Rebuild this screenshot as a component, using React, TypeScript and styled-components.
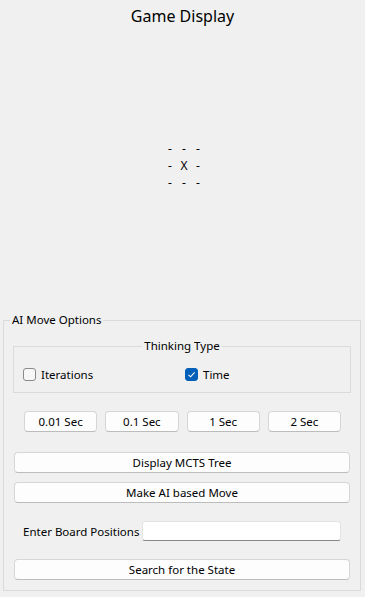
import React, { useState } from 'react';
import styled, { createGlobalStyle } from 'styled-components';

const GlobalStyle = createGlobalStyle`
  html, body {
    margin: 0;
    padding: 0;
    background: #f0f0f0;
  }
  body {
    font-family: "Noto Sans", "Open Sans", sans-serif;
    font-size: 11.5px;
    color: #000;
  }
`;

const Window = styled.div`
  width: 365px;
  height: 597px;
  display: flex;
  flex-direction: column;
  background: #f0f0f0;
  overflow: hidden;
`;

const Title = styled.div`
  height: 32px;
  display: flex;
  align-items: center;
  justify-content: center;
  font-size: 16px;
`;

const BoardArea = styled.div`
  height: 266px;
  padding: 0 0 14px 3px;
  display: flex;
  align-items: center;
  justify-content: center;
`;

const Board = styled.div`
  display: flex;
  flex-direction: column;
  align-items: center;
`;

const BoardRow = styled.div`
  display: grid;
  grid-template-columns: repeat(3, 14px);
  height: 17px;
  align-items: center;
  justify-items: center;
  font-size: 12px;
`;

const GroupBox = styled.fieldset<{ $centered?: boolean }>`
  margin: 0;
  padding: 0;
  border: 1px solid #dadada;
  min-width: 0;
  display: flex;
  flex-direction: column;

  & > legend {
    padding: 0 2px;
    margin: ${p => (p.$centered ? '0 auto' : '0 0 0 -3px')};
    line-height: 16px;
    font-size: 11.5px;
  }
`;

const Outer = styled(GroupBox)`
  margin: 0 4px 0 3px;
  height: 279px;
  box-sizing: border-box;
  padding: 0 9px;
`;

const Inner = styled(GroupBox)`
  margin-top: 10px;
  height: 55px;
  box-sizing: border-box;
`;

const CheckRow = styled.div`
  display: grid;
  grid-template-columns: 162px 1fr;
  padding: 13px 9px 0 9px;
`;

const CheckLabel = styled.label`
  display: flex;
  align-items: center;
  gap: 5px;
  height: 14px;
  white-space: nowrap;
`;

const Box = styled.span<{ $checked?: boolean }>`
  width: 13px;
  height: 13px;
  flex: none;
  box-sizing: border-box;
  border-radius: 3px;
  border: 1px solid ${p => (p.$checked ? '#005fb8' : '#8a8a8a')};
  background: ${p => (p.$checked ? '#005fb8' : '#f7f7f7')};
  display: flex;
  align-items: center;
  justify-content: center;
`;

const SecRow = styled.div`
  display: grid;
  grid-template-columns: repeat(4, 1fr);
  gap: 8px;
  margin: 18px 10px 0 11px;
`;

const Button = styled.button<{ $top?: number }>`
  margin-top: ${p => p.$top ?? 0}px;
  height: 21px;
  box-sizing: border-box;
  padding: 0;
  font-family: inherit;
  font-size: 11.5px;
  color: #000;
  background: #fdfdfd;
  border: 1px solid #d6d6d6;
  border-bottom-color: #bcbcbc;
  border-radius: 4px;
  white-space: nowrap;
  cursor: pointer;
  &:hover {
    background: #f6f6f6;
  }
`;

const WideButton = styled(Button)`
  margin-left: 1px;
  margin-right: 1px;
`;

const InputRow = styled.div`
  display: flex;
  align-items: center;
  gap: 8px;
  height: 20px;
  margin: 18px 10px 0 10px;
  white-space: nowrap;
`;

const FieldLabel = styled.span`
  flex: none;
  width: 111px;
`;

const TextInput = styled.input`
  flex: 1;
  min-width: 0;
  height: 20px;
  box-sizing: border-box;
  border: 1px solid #e4e4e4;
  border-bottom: 1px solid #878787;
  border-radius: 3px;
  background: #fff;
  font-family: inherit;
  font-size: 11.5px;
  outline: none;
  padding: 0 4px;
`;

const Check = () => (
  <svg width="9" height="9" viewBox="0 0 9 9">
    <path d="M1.5 4.8 L3.6 6.8 L7.6 2.4" fill="none" stroke="#fff" strokeWidth="1.1" />
  </svg>
);

export default function App() {
  const [useTime, setUseTime] = useState(true);
  const board = [['-', '-', '-'], ['-', 'X', '-'], ['-', '-', '-']];

  return (
    <Window>
      <GlobalStyle />
      <Title>Game Display</Title>
      <BoardArea>
        <Board>
          {board.map((row, i) => (
            <BoardRow key={i}>
              {row.map((c, j) => (
                <span key={j}>{c}</span>
              ))}
            </BoardRow>
          ))}
        </Board>
      </BoardArea>

      <Outer>
        <legend>AI Move Options</legend>
        <Inner $centered>
          <legend>Thinking Type</legend>
          <CheckRow>
            <CheckLabel onClick={() => setUseTime(false)}>
              <Box $checked={!useTime}>{!useTime && <Check />}</Box>
              Iterations
            </CheckLabel>
            <CheckLabel onClick={() => setUseTime(true)}>
              <Box $checked={useTime}>{useTime && <Check />}</Box>
              Time
            </CheckLabel>
          </CheckRow>
        </Inner>

        <SecRow>
          <Button>0.01 Sec</Button>
          <Button>0.1 Sec</Button>
          <Button>1 Sec</Button>
          <Button>2 Sec</Button>
        </SecRow>

        <WideButton $top={20}>Display MCTS Tree</WideButton>
        <WideButton $top={9}>Make AI based Move</WideButton>

        <InputRow>
          <FieldLabel>Enter Board Positions</FieldLabel>
          <TextInput />
        </InputRow>

        <WideButton $top={18}>Search for the State</WideButton>
      </Outer>
    </Window>
  );
}
